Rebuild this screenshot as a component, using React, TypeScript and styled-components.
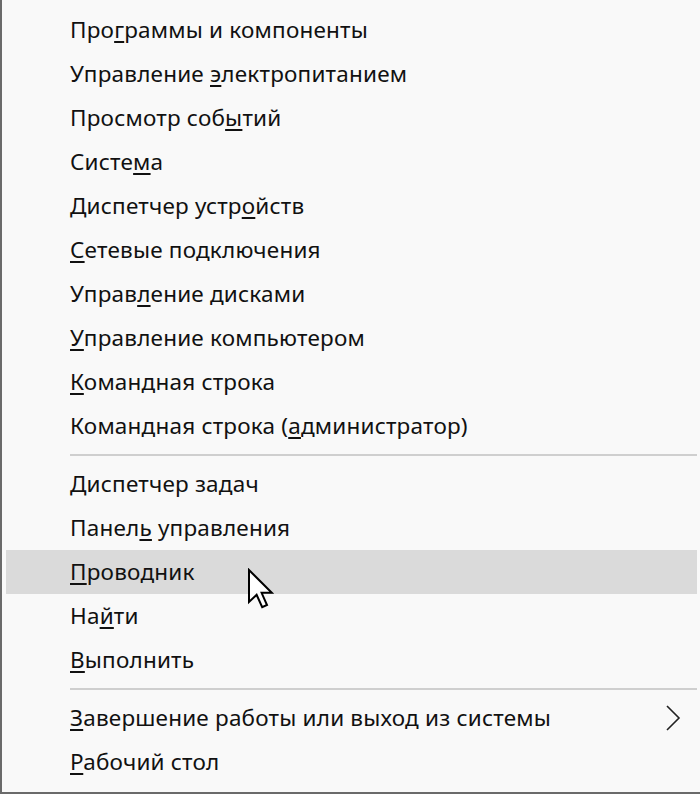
import React, { FC } from 'react';
import styled, { createGlobalStyle } from 'styled-components';

const GlobalStyle = createGlobalStyle`
  html, body {
    margin: 0;
    padding: 0;
    background: #f9f9f9;
  }
`;

const Menu = styled.div`
  position: relative;
  box-sizing: border-box;
  width: 700px;
  height: 794px;
  padding: 8px 3px 8px 4px;
  background: #f9f9f9;
  border-left: 2px solid #6a6a6a;
  border-bottom: 2px solid #6a6a6a;
  font-family: 'Noto Sans', 'Open Sans', sans-serif;
  color: #111;
`;

const Item = styled.div<{ $active?: boolean }>`
  display: flex;
  align-items: center;
  justify-content: space-between;
  height: 44px;
  padding: 0 16px 0 64px;
  font-size: 22.5px;
  letter-spacing: 0.2px;
  line-height: 1;
  background: ${({ $active }) => ($active ? '#dadada' : 'transparent')};
`;

const Key = styled.span`
  text-decoration: underline;
  text-underline-offset: 3px;
  text-decoration-thickness: 1.5px;
`;

const Separator = styled.div`
  height: 14px;
  display: flex;
  align-items: center;
  padding-left: 64px;
  &::after {
    content: '';
    flex: 1;
    height: 2px;
    background: #cfcfcf;
  }
`;

const Chevron = styled.svg`
  width: 16px;
  height: 26px;
`;

const Cursor = styled.svg`
  position: absolute;
  left: 245px;
  top: 568px;
  width: 28px;
  height: 42px;
`;

type Entry = { pre: string; key: string; post: string; sub?: boolean; active?: boolean } | 'sep';

const entries: Entry[] = [
  { pre: 'Про', key: 'г', post: 'раммы и компоненты' },
  { pre: 'Управление ', key: 'э', post: 'лектропитанием' },
  { pre: 'Просмотр соб', key: 'ы', post: 'тий' },
  { pre: 'Систе', key: 'м', post: 'а' },
  { pre: 'Диспетчер устр', key: 'о', post: 'йств' },
  { pre: '', key: 'С', post: 'етевые подключения' },
  { pre: 'Управ', key: 'л', post: 'ение дисками' },
  { pre: '', key: 'У', post: 'правление компьютером' },
  { pre: '', key: 'К', post: 'омандная строка' },
  { pre: 'Командная строка (', key: 'а', post: 'дминистратор)' },
  'sep',
  { pre: '', key: 'Д', post: 'испетчер задач' },
  { pre: 'Панел', key: 'ь', post: ' управления' },
  { pre: '', key: 'П', post: 'роводник', active: true },
  { pre: 'На', key: 'й', post: 'ти' },
  { pre: '', key: 'В', post: 'ыполнить' },
  'sep',
  { pre: '', key: 'З', post: 'авершение работы или выход из системы', sub: true },
  { pre: '', key: 'Р', post: 'абочий стол' },
];

const App: FC = () => {
  return (
    <>
      <GlobalStyle />
      <Menu>
        {entries.map((e, i) => {
          if (e === 'sep') {
            return <Separator key={i} />;
          }
          return (
            <Item key={i} $active={e.active}>
              <span>
                {e.pre}
                <Key>{e.key}</Key>
                {e.post}
              </span>
              {e.sub && (
                <Chevron viewBox="0 0 16 26">
                  <path d="M2 1 L14 13 L2 25" fill="none" stroke="#222" strokeWidth="1.6" />
                </Chevron>
              )}
            </Item>
          );
        })}
        <Cursor viewBox="0 0 14 21">
          <path
            d="M1 1 L1 17 L4.8 13.4 L7.6 19.6 L10 18.5 L7.3 12.4 L12.4 12.4 Z"
            fill="#fff"
            stroke="#000"
            strokeWidth="1"
            strokeLinejoin="miter"
          />
        </Cursor>
      </Menu>
    </>
  );
};

export default App;
